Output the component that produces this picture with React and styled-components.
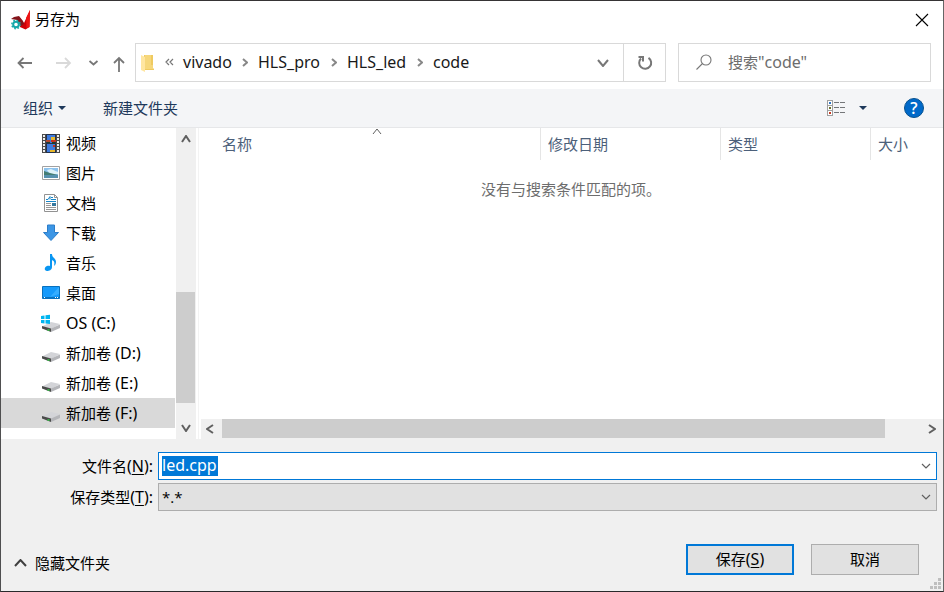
import React from "react"
import styled, { createGlobalStyle } from "styled-components"

const GlobalStyle = createGlobalStyle`
  *{
    margin:0;
    padding:0;
    box-sizing:border-box;
  }
  body{
    font-family:"Open Sans", "Noto Sans CJK SC", sans-serif;
    font-size:15px;
    line-height:20px;
    color:#000;
    overflow:hidden;
  }
  svg{
    display:block;
    flex:none;
  }
`

const Dialog = styled.div`
  width:944px;
  height:592px;
  display:flex;
  flex-direction:column;
  background-color:#f0f0f0;
  border:1px solid;
  border-color:#363435 #666 #29292b #4f4f50;
`
const TitleBar = styled.header`
  height:42px;
  padding:0 14px 5px 10px;
  display:flex;
  align-items:center;
  background-color:#fff;
`
const Title = styled.h1`
  flex:1;
  margin-left:4px;
  padding-bottom:1px;
  font-size:15px;
  font-weight:400;
`
const NavBar = styled.nav`
  height:46px;
  padding:0 12px 7px 15px;
  display:flex;
  align-items:center;
  background-color:#fff;
`
const NavIcons = styled.div`
  width:119px;
  display:flex;
  align-items:center;
`
const Address = styled.div`
  width:531px;
  height:39px;
  display:flex;
  align-items:center;
  border:1px solid #d9d9d9;
  padding-left:5px;
`
const Crumbs = styled.div`
  flex:1;
  display:flex;
  align-items:center;
  padding-bottom:1px;
  color:#191919;
`
const Latin = styled.span`
  font-family:"Noto Sans", sans-serif;
  font-size:16px;
  line-height:20px;
`
const Crumb = styled(Latin)`
  width:${(props) => props.$width}px;
  padding-bottom:1px;
  white-space:nowrap;
`
const CrumbArrow = styled.span`
  width:27px;
  display:flex;
  justify-content:center;
`
const Refresh = styled.div`
  width:42px;
  height:37px;
  margin-left:14px;
  display:flex;
  align-items:center;
  justify-content:center;
  border-left:1px solid #d9d9d9;
`
const Search = styled.div`
  width:253px;
  height:39px;
  margin-left:12px;
  padding:0 0 1px 17px;
  display:flex;
  align-items:center;
  gap:16px;
  border:1px solid #d9d9d9;
  color:#6d6d6d;
`
const Toolbar = styled.div`
  height:39px;
  padding:0 19px 0 22px;
  display:flex;
  align-items:center;
  background-color:#f4f5f7;
  border-bottom:1px solid #e6e7e9;
  color:#1e395b;
`
const ToolText = styled.span`
  margin-left:${(props) => props.$before || 0}px;
  margin-right:${(props) => props.$after || 0}px;
`
const ToolRight = styled.div`
  margin-left:auto;
  display:flex;
  align-items:center;
`
const Main = styled.main`
  height:311px;
  display:flex;
  background-color:#fff;
`
const Tree = styled.ul`
  width:174px;
  list-style:none;
`
const TreeItem = styled.li`
  height:30px;
  padding-left:41px;
  display:flex;
  align-items:center;
  gap:6px;
  white-space:nowrap;
  background-color:${(props) => (props.$selected ? "#d9d9d9" : "transparent")};
`
const VerticalScroll = styled.div`
  width:20px;
  margin-left:1px;
  padding:7px 0 6px;
  display:flex;
  flex-direction:column;
  align-items:center;
  background-color:#f0f0f0;
`
const VerticalThumb = styled.div`
  width:19px;
  height:111px;
  margin:149px 1px 21px 0;
  background-color:#cdcdcd;
`
const Files = styled.section`
  flex:1;
  display:flex;
  flex-direction:column;
  margin-left:2px;
  border-left:1px solid #f3f3f3;
`
const Columns = styled.div`
  height:32px;
  position:relative;
  display:flex;
  color:#4c607a;
`
const Column = styled.div`
  width:${(props) => props.$width}px;
  padding:6px 0 0 ${(props) => props.$indent || 7}px;
  border-right:${(props) => (props.$last ? "none" : "1px solid #e5e5e5")};
  overflow:hidden;
  white-space:nowrap;
`
const SortMark = styled.div`
  position:absolute;
  left:173px;
  top:0;
`
const Empty = styled.p`
  flex:1;
  padding:19px 0 0 282px;
  color:#6d6d6d;
`
const HorizontalScroll = styled.div`
  height:20px;
  margin-left:2px;
  padding:0 6px 1px 5px;
  display:flex;
  align-items:center;
  background-color:#f0f0f0;
`
const HorizontalThumb = styled.div`
  width:663px;
  height:19px;
  margin:0 43px 0 8px;
  background-color:#cdcdcd;
`
const Form = styled.form`
  padding:13px 6px 0 0;
  display:flex;
  flex-direction:column;
  gap:3px;
`
const Field = styled.div`
  display:flex;
  align-items:center;
`
const Label = styled.label`
  width:157px;
  padding-right:5px;
  text-align:right;
  white-space:nowrap;
  u{
    text-underline-offset:2px;
  }
`
const Combo = styled.div`
  flex:1;
  height:28px;
  padding:0 5px 1px 3px;
  display:flex;
  align-items:center;
  justify-content:space-between;
  background-color:${(props) => (props.$active ? "#fff" : "#e1e1e1")};
  border:1px solid ${(props) => (props.$active ? "#0078d7" : "#adadad")};
`
const Selected = styled(Latin)`
  width:56px;
  height:20px;
  line-height:19px;
  background-color:#0078d7;
  color:#fff;
`
const Footer = styled.footer`
  flex:1;
  padding:33px 24px 0 13px;
  display:flex;
  align-items:flex-start;
`
const HideFolders = styled.div`
  flex:1;
  padding-top:9px;
  display:flex;
  align-items:center;
  gap:8px;
`
const Button = styled.button`
  width:108px;
  height:31px;
  padding-bottom:${(props) => (props.$primary ? 1 : 2)}px;
  margin-left:${(props) => (props.$primary ? 0 : 17)}px;
  background-color:#e1e1e1;
  border:${(props) => (props.$primary ? "2px solid #0078d7" : "1px solid #adadad")};
  font:inherit;
  color:#000;
  u{
    text-underline-offset:2px;
  }
`
const Grip = styled.div`
  position:fixed;
  right:2px;
  bottom:2px;
`
const HelpBadge = styled.span`
  width:20px;
  height:20px;
  margin-left:37px;
  display:flex;
  align-items:center;
  justify-content:center;
  border-radius:50%;
  border:1px solid #07518f;
  background-color:#0069c9;
  color:#fff;
  font-size:16px;
  font-weight:600;
`

const Chevron = ({ dir = "down", w = 10, h = 6, color = "#606060", stroke = 2 }) => {
  const points = {
    down: `1,1 ${w / 2},${h - 1} ${w - 1},1`,
    up: `1,${h - 1} ${w / 2},1 ${w - 1},${h - 1}`,
    right: `1,1 ${w - 1},${h / 2} 1,${h - 1}`,
    left: `${w - 1},1 1,${h / 2} ${w - 1},${h - 1}`
  }
  return (
    <svg width={w} height={h} fill="none" stroke={color} strokeWidth={stroke}>
      <polyline points={points[dir]} />
    </svg>
  )
}

const Caret = () => (
  <svg width="8" height="4"><path d="M0 0h8L4 4z" fill="#1e395b" /></svg>
)

const AppIcon = () => (
  <svg width="20" height="20" viewBox="0 0 20 20">
    <path d="M8 7l5 6L19 0l-.5 17-4 2.500L9 17z" fill="#cf0008" />
    <path d="M15 8l4-8-.5 17-3 1z" fill="#ee1414" />
    <path d="M0 9l3-2 5-1 4 5 1 3-3 2-4-6z" fill="#84151b" />
    <circle cx="5" cy="14.500" r="2.800" fill="#fff" stroke="#15a8aa" strokeWidth="2" />
    <circle cx="5" cy="14.500" r="4.200" fill="none" stroke="#15a8aa" strokeWidth="1.400" strokeDasharray="1.650 1.650" />
  </svg>
)

const FolderIcon = () => (
  <svg width="14" height="18" viewBox="0 0 14 18">
    <path d="M3 1h9v13l1 1v1H3z" fill="#efca60" />
    <path d="M4 1h6v10h2v4H4z" fill="#f6d77b" />
    <path d="M0 1l4 2v15l-4-2z" fill="#ffe6a0" />
  </svg>
)

const VideoIcon = () => (
  <svg width="18" height="19" shapeRendering="crispEdges">
    <path d="M0 0h18v19H0z" fill="#4b4b4b" />
    <path d="M2 1v17M16 1v17" stroke="#eee" strokeWidth="2" strokeDasharray="2 1" />
    <path d="M4 0h10v19H4z" fill="#25334d" />
    <path d="M5 1h8v8H5zM5 10h8v8H5z" fill="#3f7bdd" />
    <path d="M4 6h4v2H4z" fill="#b4472f" />
    <path d="M9 3h4v3H9zM8 16h5v2H8z" fill="#e7b72c" />
    <path d="M9 6h5v2H9zM11 11h2v2h-2z" fill="#c43120" />
    <path d="M5 8h3v1H5zM10 8h3v2h-3z" fill="#203d2c" />
  </svg>
)

const PictureIcon = () => (
  <svg width="18" height="14">
    <path d="M.5.5h17v13H.5z" fill="#fff" stroke="#a1a1a1" />
    <path d="M2 2h14v10H2z" fill="#8dc3ee" />
    <path d="M5 4l4-1 7 3v2H8z" fill="#ddf1f8" />
    <path d="M2 5l6 2 8 2v1H2z" fill="#447d73" />
    <path d="M2 9h14v3H2z" fill="#5791ae" />
  </svg>
)

const DocumentIcon = () => (
  <svg width="18" height="18">
    <path d="M2.500.5h10l3 3v14h-13z" fill="#fff" stroke="#929292" />
    <path d="M12.500.5v3h3" fill="none" stroke="#929292" />
    <path d="M4 5.500h2l2-3v3M9 3.500h2M9 5.500h5M4 7.500h10" fill="none" stroke="#1686c8" />
    <path d="M4 9.500h5M4 11.500h5M4 13.500h10M4 15.500h10" stroke="#969696" />
    <path d="M10 9h4v3h-4z" fill="#35789e" />
  </svg>
)

const DownloadIcon = () => (
  <svg width="18" height="18">
    <path d="M5.500 1h7v7.500h4L9 16.500 1.500 8.500h4z" fill="#3c96e5" stroke="#2c7dc9" />
  </svg>
)

const MusicIcon = () => (
  <svg width="18" height="18">
    <path d="M8 0h2c0 4 4 4 4 8 0 2-1 3-2 4 1-4 0-5-2-6v7c0 3-3 4-5 4-3 0-3-4 0-5 1-.5 2-.4 3 0z" fill="#0996f2" />
  </svg>
)

const DesktopIcon = () => (
  <svg width="18" height="14">
    <path d="M.5.5h17v12H.5z" fill="#159afb" stroke="#0871be" />
    <path d="M17 1v7l-9 3z" fill="#35adff" />
    <path d="M1 11.500h16" stroke="#0871be" />
    <path d="M2 11.500h1M13 11.500h1M15 11.500h1" stroke="#fff" />
  </svg>
)

const DriveIcon = ({ system }) => (
  <svg width="18" height="18" overflow="visible">
    <path d="M0 12.500L9 8l9 2-9 5z" fill="#d3d4d8" />
    <path d="M0 12l9 2.500V18l-9-3.500z" fill="#4b4c4b" />
    <path d="M9 14.500l9-4v3.500l-9 4z" fill="#b4b5b9" />
    <path d="M5.500 15h2v2h-2z" fill="#35ad45" />
    {system && (
      <path d="M-1 2l3.500-.5V5H-1zM3.500 1.300L8 .8V5H3.500zM-1 6h3.500v3.500L-1 9zM3.500 6H8v4l-4.500-.5z" fill="#00b5f0" />
    )}
  </svg>
)

const NavArrows = () => (
  <svg width="112" height="20" fill="none" stroke="#777" strokeWidth="1.800">
    <path d="M16 10H2M7.500 5L2.500 10l5 5" />
    <path d="M40 10h14M49 5l5 5-5 5" stroke="#d9d9d9" />
    <path d="M73.500 8l4 3.500 4-3.500" />
    <path d="M103 19V5M98 10l5-5 5 5" />
  </svg>
)

const RefreshIcon = () => (
  <svg width="16" height="16" fill="none" stroke="#777" strokeWidth="2">
    <path d="M11.500 2.800A6 6 0 1 1 4 3.500" />
    <path d="M1.500 2H6v4.500" />
  </svg>
)

const ViewIcon = () => (
  <svg width="20" height="16" shapeRendering="crispEdges">
    <path d="M.5.5h5v15h-5zM.5 5.500h5M.5 10.500h5" fill="#fff" stroke="#a0a0a0" />
    <path d="M2 2h2v2H2z" fill="#2f75c4" />
    <path d="M2 7h2v2H2z" fill="#6c712a" />
    <path d="M2 12h2v2H2z" fill="#c73b22" />
    <path d="M7 2.500h5M13 2.500h5M7 7.500h5M13 7.500h5M7 12.500h5M13 12.500h5" stroke="#747679" />
  </svg>
)

const places = [
  { name: "视频", icon: <VideoIcon /> },
  { name: "图片", icon: <PictureIcon /> },
  { name: "文档", icon: <DocumentIcon /> },
  { name: "下载", icon: <DownloadIcon /> },
  { name: "音乐", icon: <MusicIcon /> },
  { name: "桌面", icon: <DesktopIcon /> },
  { name: "OS", drive: "(C:)", icon: <DriveIcon system /> },
  { name: "新加卷", drive: "(D:)", icon: <DriveIcon /> },
  { name: "新加卷", drive: "(E:)", icon: <DriveIcon /> },
  { name: "新加卷", drive: "(F:)", icon: <DriveIcon />, selected: true }
]

export default class App extends React.Component {
  state = {
    fileName: "led.cpp",
    path: [
      { name: "vivado", width: 48 },
      { name: "HLS_pro", width: 62 },
      { name: "HLS_led", width: 59 },
      { name: "code", width: 38 }
    ]
  }
  render() {
    return (
      <Dialog>
        <GlobalStyle />
        <TitleBar>
          <AppIcon />
          <Title>另存为</Title>
          <svg width="14" height="14" stroke="#000" strokeWidth="1.100">
            <path d="M1 1l12 12M13 1L1 13" />
          </svg>
        </TitleBar>
        <NavBar>
          <NavIcons><NavArrows /></NavIcons>
          <Address>
            <FolderIcon />
            <Crumbs>
              <svg width="28" height="10" fill="none" stroke="#777" strokeWidth="1.200">
                <path d="M14 2l-3 3 3 3M18 2l-3 3 3 3" />
              </svg>
              {this.state.path.map((part, i) => (
                <React.Fragment key={part.name}>
                  {i > 0 && <CrumbArrow><Chevron dir="right" w={6} h={9} color="#888" /></CrumbArrow>}
                  <Crumb $width={part.width}>{part.name}</Crumb>
                </React.Fragment>
              ))}
            </Crumbs>
            <Chevron w={12} h={8} color="#777" />
            <Refresh><RefreshIcon /></Refresh>
          </Address>
          <Search>
            <svg width="16" height="17" fill="none" stroke="#777" strokeWidth="1.100">
              <circle cx="10" cy="6" r="5" />
              <path d="M6.500 9.500L.5 15.500" />
            </svg>
            <span>搜索<Latin>"code"</Latin></span>
          </Search>
        </NavBar>
        <Toolbar>
          <ToolText $after={5}>组织</ToolText>
          <Caret />
          <ToolText $before={37}>新建文件夹</ToolText>
          <ToolRight>
            <ViewIcon />
            <svg width="12" height="4" />
            <Caret />
            <HelpBadge>?</HelpBadge>
          </ToolRight>
        </Toolbar>
        <Main>
          <Tree>
            {places.map((place) => (
              <TreeItem key={place.name + place.drive} $selected={place.selected}>
                {place.icon}
                <span>
                  {place.drive === "(C:)" ? <Latin>{place.name}</Latin> : place.name}
                  {place.drive && <Latin> {place.drive}</Latin>}
                </span>
              </TreeItem>
            ))}
          </Tree>
          <VerticalScroll>
            <Chevron dir="up" h={8} />
            <VerticalThumb />
            <Chevron h={8} />
          </VerticalScroll>
          <Files>
            <Columns>
              <Column $width={342} $indent={23}>名称</Column>
              <Column $width={180}>修改日期</Column>
              <Column $width={150}>类型</Column>
              <Column $width={70} $last>大小</Column>
              <SortMark><Chevron dir="up" h={7} stroke={1} /></SortMark>
            </Columns>
            <Empty>没有与搜索条件匹配的项。</Empty>
            <HorizontalScroll>
              <Chevron dir="left" w={8} h={10} />
              <HorizontalThumb />
              <Chevron dir="right" w={8} h={10} />
            </HorizontalScroll>
          </Files>
        </Main>
        <Form>
          <Field>
            <Label>文件名<Latin>(<u>N</u>):</Latin></Label>
            <Combo $active>
              <Selected>{this.state.fileName}</Selected>
              <Chevron stroke={1.2} />
            </Combo>
          </Field>
          <Field>
            <Label>保存类型<Latin>(<u>T</u>):</Latin></Label>
            <Combo>
              <span>*.*</span>
              <Chevron stroke={1.2} />
            </Combo>
          </Field>
        </Form>
        <Footer>
          <HideFolders>
            <Chevron dir="up" w={13} h={8} color="#404040" />
            <span>隐藏文件夹</span>
          </HideFolders>
          <Button $primary>保存<Latin>(<u>S</u>)</Latin></Button>
          <Button>取消</Button>
        </Footer>
        <Grip>
          <svg width="12" height="12" fill="#bfbfbf">
            <path d="M8 0h3v3H8zM4 4h3v3H4zM8 4h3v3H8zM0 8h3v3H0zM4 8h3v3H4zM8 8h3v3H8z" />
          </svg>
        </Grip>
      </Dialog>
    )
  }
}
